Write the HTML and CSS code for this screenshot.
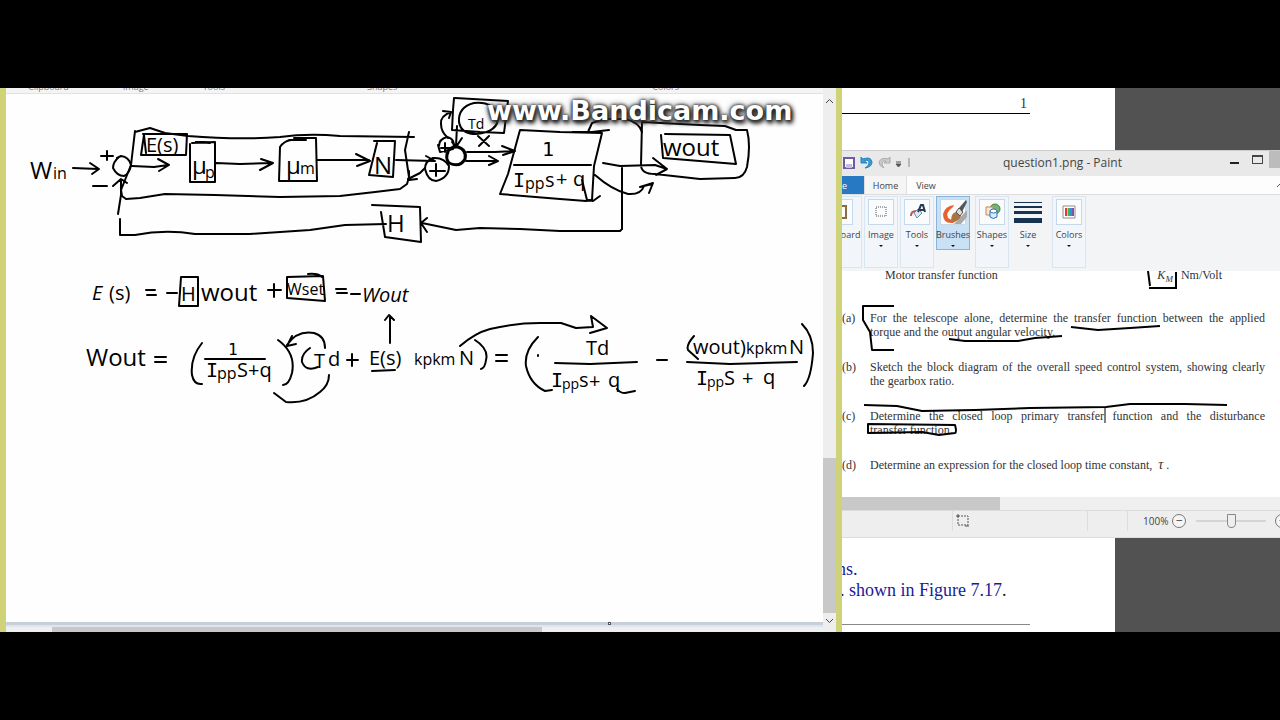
FILE: index.html
```html
<!DOCTYPE html>
<html lang="en">
<head>
<meta charset="utf-8">
<title>question1.png - Paint</title>
<link rel="stylesheet" href="styles.css">
</head>
<body>
<main class="screen">
  <section class="board" aria-label="Paint drawing">
    <div class="board-main">
      <div class="board-groups">
        <span class="g-clip">Clipboard</span><span class="g-image">Image</span><span class="g-tools">Tools</span><span class="g-shapes">Shapes</span><span class="g-colors">Colors</span>
      </div>
      <div class="board-canvas">
        <svg class="ink" viewBox="6 94 817 526" role="img" aria-label="Block diagram and equations">
          <!-- block diagram -->
          <path d="M135 132L150 128L165 133L188 136Q240 140 280 137Q308 133 340 136L414 137M135 131L131 165L121 190L122 196L126 199L140 198L165 194L215 195L280 197L340 196L375 192L400 189L407 184L409 177L405 150L409 132"/>
          <path d="M143 134H187L186 155H141L144 135L146 153M101 156H113M107 151V160M93 186H107M73 168L98 169M90 163L99 169L92 174"/>
          <path d="M119 157Q113 162 113 168Q117 176 124 176Q130 173 131 165Q129 157 121 156L117 158M132 166L154 167L168 165M158 159L169 165L159 171"/>
          <path d="M192 143L215 142L215 182H190V144M196 142L210 143M216 163L240 164L272 163M261 159L273 163L260 170M289 140L306 140M294 138L316 138L317 181H279L280 147Q284 141 291 140M318 160H369M356 154L370 161L357 166"/>
          <path d="M374 141H395L393 177L369 175L377 143M396 160L434 161M426 156L435 161M408 179L420 173L425 168M409 171V180L417 179"/>
          <path d="M113 186L121 179L127 183M121 180V195L118 214M120 219V235L135 235Q165 229 195 234L250 234L310 230L345 225L386 224M372 205L420 207L421 242L385 237L381 212M427 218L421 223L427 232M422 223L456 230L480 228L520 229L560 231L620 231L622 229V168"/>
          <path d="M455 98L508 101L504 133L480 132L452 130L453 110L454 98M459 122Q458 107 474 103Q493 101 498 116Q499 132 476 134Q461 134 459 122M448 138Q441 132 441 124Q440 116 451 112L443 111M451 112L449 118M457 126L456 146M452 142L456 147L462 138"/>
          <path d="M439 146Q439 139 447 137Q456 139 453 149L440 152L438 145M445 143V152M441 148H451M425 169Q425 161 433 158Q444 157 449 166Q449 178 436 181Q428 181 425 169M436 164V176M430 171H445"/>
          <path class="bold" d="M447 154Q449 146 458 147Q467 150 465 159Q460 168 449 163Q445 158 448 152"/>
          <path d="M478 136L489 146M489 136L479 146M467 152H495L515 151M502 146L515 151L503 155M466 161L497 161M489 156L498 161L489 165"/>
          <path d="M520 130L560 132L602 133L594 166L592 200L586 201L560 199L500 194L508 174ZM514 165H591M573 132H592L609 130M588 132L592 123L605 119L625 119Q639 122 642 132M582 180L587 200L593 201L600 196M595 175Q612 190 628 194Q641 195 644 186L652 184M640 187L653 183L649 193"/>
          <path d="M642 122L700 125L725 126L736 130L747 130Q751 145 747 167Q744 178 735 178L700 179L655 174Q641 174 641 165ZM665 134L730 135L736 164L663 158L661 135M603 163L620 166L655 165L667 169L656 175M653 158L667 169"/>
          <text class="t24" x="30" y="179">W</text><text class="t16" x="53" y="179">in</text>
          <text class="t20" x="146" y="152">E(s)</text>
          <text class="t24" x="192" y="174">μ</text><text class="t16" x="205" y="178">p</text>
          <text class="t24" x="286" y="174">μ</text><text class="t16" x="300" y="174">m</text>
          <text class="t24" x="374" y="174">N</text>
          <text class="t24" x="387" y="232">H</text>
          <text class="t14" x="468" y="129">Td</text>
          <text class="t20 slab" x="542" y="156">1</text>
          <text class="t20 slab" x="513" y="187">I</text><text class="t16" x="525" y="189">pp</text><text class="t20" x="545" y="187">s</text><text class="t20" x="556" y="186">+</text><text class="t20" x="573" y="186">q</text>
          <text class="t24" x="663" y="156">wout</text>
          <!-- error equation -->
          <path d="M167 293H177M181 277H198V306H179ZM268 290H281M274 284V297M287 277L323 276L325 301L287 298ZM308 274Q318 273 322 277M351 294H360M336 289H346M337 293H347M390 343V317M385 320L389 315L394 320M146 290H155M147 295H156"/>
          <text class="t20 slant" x="92" y="300">E</text><text class="t20" x="109" y="300">(s)</text>
          <text class="t20" x="181" y="301">H</text><text class="t24" x="201" y="301">wout</text>
          <text class="t16" x="287" y="295">Wset</text><text class="t20 slant" x="362" y="302">Wout</text>
          <!-- output equation -->
          <path d="M202 343Q190 358 192 375Q194 385 202 384M205 359L265 359M278 340Q296 353 292 373Q289 385 283 385M287 345Q297 330 314 333Q325 336 325 348M292 336L287 346L296 344M310 348Q301 354 302 362Q306 372 318 367M274 393L286 402Q306 404 320 392Q329 385 329 375M347 360H358M352 354V366M372 371L395 370M155 357H166M155 362H166"/>
          <path d="M460 346Q475 333 490 329Q515 323 540 323L561 323L576 328L593 327L591 316L607 328L590 333M475 340Q489 349 486 360Q485 368 481 369M496 355H507M496 361H507M538 337Q524 351 526 366Q530 384 545 391L552 390M538 355V356M555 363L590 364L637 362M657 360H667M687 362L730 364L797 362M694 336Q686 345 688 350L698 359M802 324Q813 335 813 353Q811 379 804 386M617 389Q620 393 625 393L635 391"/>
          <text class="t24" x="86" y="366">Wout</text>
          <text class="t16 slab" x="228" y="355">1</text>
          <text class="t20 slab" x="206" y="377">I</text><text class="t16" x="217" y="379">pp</text><text class="t20" x="237" y="377">S+q</text>
          <text class="t20" x="314" y="368">T</text><text class="t20" x="328" y="366">d</text>
          <text class="t20" x="369" y="365">E(s)</text><text class="t16" x="414" y="365">kpkm</text><text class="t20" x="459" y="365">N</text>
          <text class="t20" x="586" y="355">Td</text>
          <text class="t20 slab" x="551" y="387">I</text><text class="t14" x="562" y="389">pp</text><text class="t20" x="579" y="387">s</text><text class="t20" x="589" y="388">+</text><text class="t20" x="608" y="387">q</text>
          <text class="t20" x="693" y="354">wout)</text><text class="t16" x="746" y="354">kpkm</text><text class="t20" x="789" y="354">N</text>
          <text class="t20 slab" x="696" y="385">I</text><text class="t14" x="707" y="387">pp</text><text class="t20" x="724" y="385">S</text><text class="t20" x="742" y="385">+</text><text class="t20" x="763" y="384">q</text>
        </svg>
      </div>
      <div class="canvas-edge"><span class="handle"></span></div>
      <div class="hscroll"><span class="hscroll-thumb"></span></div>
    </div>
    <div class="vscroll">
      <svg class="chev" viewBox="0 0 13 15"><path d="M3 9L6.500 5.500L10 9"/></svg>
      <span class="vscroll-thumb"></span>
      <svg class="chev" viewBox="0 0 13 15"><path d="M3 6L6.500 9.500L10 6"/></svg>
    </div>
  </section>

  <section class="desk">
    <div class="page page-top"><div class="page-head">1</div></div>

    <article class="paint">
      <header class="titlebar">
        <svg class="qat" viewBox="0 0 70 16" aria-hidden="true">
          <path d="M2 3H12V13H2Z" fill="#fff" stroke="#6f5aa5" stroke-width="2"/><path d="M4 9H10V13H4Z" fill="#c5bddc"/>
          <path d="M19 2V8H25L22.500 6Q27 4 27 8Q27 11 23 13Q30 12 30 7Q29 1 21 4Z" fill="#3a9bd5" stroke="#2583bd"/>
          <path d="M48 2V8H42L44 6Q40 5 40 8Q40 11 42 13Q37 11 37 7Q39 2 46 4Z" fill="#ccc" stroke="#aaa"/>
          <path d="M54 7H59M54 9H59L56.500 12Z" stroke="#555" fill="#555"/><path d="M67 3V12" stroke="#888"/>
        </svg>
        <h1>question1.png - Paint</h1>
        <button class="winbtn" aria-label="Minimize"><i class="min"></i></button>
        <button class="winbtn" aria-label="Maximize"><i class="max"></i></button>
        <button class="winbtn close" aria-label="Close"></button>
      </header>
      <nav class="tabs">
        <button class="tab file">File</button><button class="tab on">Home</button><button class="tab">View</button>
        <svg class="collapse" viewBox="0 0 8 8" aria-hidden="true"><path d="M1 6L4 3L7 6"/></svg>
      </nav>
      <div class="ribbon">
        <button class="tool clip"><span class="pic"><svg viewBox="0 0 24 24"><path d="M7 6H18V18H7Z" fill="#fff" stroke="#8b6b3f" stroke-width="2"/></svg></span>Clipboard<i class="drop"></i></button>
        <button class="tool"><span class="pic"><svg viewBox="0 0 24 24"><path d="M7 7H17V16H7Z" fill="none" stroke="#555" stroke-dasharray="1 1"/></svg></span>Image<i class="drop"></i></button>
        <button class="tool"><span class="pic"><svg viewBox="0 0 24 24"><path d="M6 16Q6 11 11 11" fill="none" stroke="#cf5142" stroke-width="2"/><path d="M9 13L13 9L17 13L12 18Z" fill="#dde9f2" stroke="#6e8ba5"/><path d="M13 12L16 5H18L20 12M15 10H19" fill="none" stroke="#263a50" stroke-width="2"/></svg></span>Tools<i class="drop"></i></button>
        <button class="tool brush"><span class="pic"><svg viewBox="0 0 26 26"><path d="M13 5Q4 6 2 14Q2 24 12 23L20 18Q12 22 7 18Q4 13 12 7Z" fill="#e66231"/><path d="M26 0V17L20 24H13L26 10Z" fill="#aaa"/><path d="M10 21Q10 13 15 12L20 16Q18 22 10 21Z" fill="#a97542"/><path d="M15 12L18 8L22 12L19 16Z" fill="#ddd" stroke="#555"/><path d="M18 8L25 0L26 2L21 12Z" fill="#555"/></svg></span>Brushes<i class="drop"></i></button>
        <button class="tool shapes"><span class="pic"><svg viewBox="0 0 24 24"><circle cx="15" cy="9" r="5" fill="#78b46c" stroke="#3c8843"/><path d="M6 7H13V15H6Z" fill="#fbe9dc" stroke="#c98358"/><path d="M10 11V17Q13 20 17 17V11Z" fill="#dcecff" stroke="#2472bd"/><ellipse cx="13.500" cy="11" rx="3.500" ry="2" fill="#fff" stroke="#2472bd"/></svg></span>Shapes<i class="drop"></i></button>
        <button class="tool size"><span class="pic"><svg viewBox="0 0 28 26"><path d="M0 3H28V4H0ZM0 7H28V9H0ZM0 12H28V15H0ZM0 19H28V24H0Z" fill="#18334f"/></svg></span>Size<i class="drop"></i></button>
        <button class="tool colors"><span class="pic"><svg viewBox="0 0 24 24"><path d="M6 6H18V18H6Z" fill="#fff" stroke="#998d84"/><path d="M8 8H10V16H8Z" fill="#e4373e"/><path d="M10 8H11V16H10Z" fill="#f4c82e"/><path d="M11 8H13V16H11Z" fill="#45b449"/><path d="M13 8H15V16H13Z" fill="#2b94d8"/><path d="M15 8H17V16H15Z" fill="#7954b5"/></svg></span>Colors<i class="drop"></i></button>
      </div>
      <div class="sheet">
        <div class="motor"><span>Motor transfer function</span><span><i>K<sub>M</sub></i><span class="unit">Nm/Volt</span></span></div>
        <div class="q"><span>(a)</span><p><span class="full">For the telescope alone, determine the transfer function between the applied</span> torque and the output angular velocity.</p></div>
        <div class="q"><span>(b)</span><p><span class="full">Sketch the block diagram of the overall speed control system, showing clearly</span> the gearbox ratio.</p></div>
        <div class="q"><span>(c)</span><p><span class="full">Determine the closed loop primary transfer function and the disturbance</span> transfer function.</p></div>
        <div class="q"><span>(d)</span><p>Determine an expression for the closed loop time constant, &nbsp;<i class="tau">τ</i> .</p></div>
        <svg class="marks" viewBox="842 271 438 226" aria-hidden="true">
          <path d="M1148 271L1150 286M1149 288H1177M1176 272V288M894 306H863L863 320L870 332L872 350H894M1071 327L1098 330L1130 328L1160 326M949 339L965 341H1018L1035 338L1062 336M864 405L897 406L922 411L975 410L1030 408L1106 407L1130 404H1185L1227 405M868 424L955 425Q957 432 955 433L939 435L922 432L868 433Z"/><path class="thin" d="M1105 408V423"/>
        </svg>
      </div>
      <div class="paint-scroll"><span></span></div>
      <footer class="status">
        <span class="cell first"></span>
        <span class="cell dims"><svg viewBox="0 0 16 14" aria-hidden="true"><path d="M3 2H13V11H3Z" stroke-dasharray="2 1"/><path d="M1 2H4M3 0V3M10 12H14"/></svg></span>
        <span class="cell gap"></span>
        <label for="zoom">100%</label>
        <button class="round" aria-label="Zoom out">−</button>
        <input id="zoom" type="range" min="0" max="100" value="50">
        <button class="round" aria-label="Zoom in">+</button>
      </footer>
    </article>

    <div class="page page-bottom"><p class="ns">ns.</p><p><span>.</span> shown in Figure 7.17<b>.</b></p><hr></div>
  </section>
  <div class="watermark">www.Bandicam.com</div>
</main>
</body>
</html>
```
FILE: styles.css
```css
* { box-sizing: border-box; }
body { margin: 0; background: #000; font-family: "Open Sans", "Noto Sans", sans-serif; }
button { font: inherit; color: inherit; border: 0; padding: 0; margin: 0; background: none; }
p, h1 { margin: 0; font-weight: 400; }
.screen { position: relative; display: flex; min-height: 544px; height: calc(100vh - 176px); margin: 88px 0; overflow: hidden; }

/* drawing window */
.board { display: flex; flex: 0 0 auto; width: 842px; max-width: 66%; border: solid #cfd276; border-width: 0 6px; box-shadow: inset 1px 0 #b7b567; background: #fff; }
.board-main { flex: 1; min-width: 0; display: flex; flex-direction: column; }
.board-groups { display: flex; align-items: flex-end; height: 6px; overflow: hidden; background: #f4f4f4; border-bottom: 1px solid #e2e2e2; font-size: 9px; line-height: 10px; color: #777; padding: 0 0 1px 22px; }
.g-image { margin-left: 54px; }
.g-tools { margin-left: 54px; }
.g-shapes { margin-left: 142px; }
.g-colors { margin-left: 255px; }
.board-canvas { flex: 1; min-height: 0; background: #fefefe; }
.ink { display: block; width: 100%; fill: none; stroke: #000; stroke-width: 2; stroke-linecap: round; stroke-linejoin: round; }
.ink .bold { stroke-width: 3; }
.ink text { fill: #000; stroke: none; font-family: "Open Sans", sans-serif; }
.ink .slab { font-family: "DejaVu Sans Mono", monospace; }
.ink .slant { font-style: italic; }
.t14 { font-size: 14px; }
.t16 { font-size: 16px; }
.t20 { font-size: 20px; }
.t24 { font-size: 24px; }
.canvas-edge { flex: none; height: 5px; background: #c9cfd9; border-bottom: 2px solid #dfe5ee; padding-left: 602px; }
.handle { display: block; width: 3px; height: 3px; border: 1px solid #555; background: #fff; }
.hscroll { flex: none; height: 5px; background: #efefef; padding-left: 46px; }
.hscroll-thumb { display: block; width: 490px; height: 5px; background: #c8c8c8; }
.vscroll { flex: 0 0 13px; display: flex; flex-direction: column; background: #eee; padding-top: 6px; }
.vscroll-thumb { display: block; flex: 0 0 155px; margin-top: auto; background: #c8c8c8; }
.chev { flex: none; width: 13px; height: 15px; fill: none; stroke: #444; stroke-width: 1; }
.chev:last-child { margin-bottom: 4px; }

/* right side */
.desk { flex: 1; min-width: 0; display: flex; flex-direction: column; background: #525252; font-family: "Liberation Serif", serif; }
.page { flex: none; width: 273px; background: #fff; }
.page-top { height: 62px; }
.page-head { width: 188px; height: 26px; padding: 7px 3px 0 0; border-bottom: 1px solid #000; text-align: right; font-size: 14px; line-height: 17px; color: #333; }
.page-bottom { height: 94px; padding-top: 21px; color: #1a1a9a; font-size: 18px; line-height: 21px; white-space: pre; overflow: hidden; }
.page-bottom .ns { margin-left: -5px; }
.page-bottom span { margin-left: -2px; }
.page-bottom b { font-weight: 400; color: #222; }
.page-bottom hr { width: 188px; margin: 23px 0 0; border: 0; border-top: 1px solid #888; }

.paint { flex: 1; min-height: 0; display: flex; flex-direction: column; overflow: hidden; background: #fff; font-family: "Open Sans", sans-serif; }
.titlebar { flex: none; display: flex; align-items: flex-start; height: 26px; background: #e9e9e9; border-top: 1px solid #ccc; color: #444; }
.qat { width: 70px; height: 16px; margin-top: 4px; fill: none; }
.titlebar h1 { flex: 1; padding-left: 91px; font-size: 12px; line-height: 24px; white-space: nowrap; }
.winbtn { flex: none; width: 23px; height: 17px; display: flex; justify-content: center; align-items: center; }
.winbtn.close { width: 11px; background: #bcbcbc; }
.min { width: 9px; height: 2px; background: #222; margin-top: 6px; }
.max { width: 11px; height: 9px; border: 1px solid #444; border-top-width: 2px; }
.tabs { flex: none; display: flex; height: 19px; background: #fdfdfd; border-bottom: 1px solid #ddd; font-size: 9px; color: #444; }
.tab { width: 38px; line-height: 20px; }
.tab.on { background: #f5f5f5; border: solid #ddd; border-width: 0 1px; width: 43px; }
.tab.file { width: 50px; margin-left: -28px; background: #2679c2; color: #fff; text-align: right; padding-right: 17px; }
.collapse { width: 8px; height: 8px; margin: 5px -4px 0 auto; fill: none; stroke: #555; }
.ribbon { flex: none; display: flex; gap: 2px; height: 76px; padding-top: 1px; background: #f3f4f5; color: #444; font-size: 9px; }
.tool { flex: none; width: 34px; height: 72px; display: flex; flex-direction: column; align-items: center; border: 1px solid #d8e6f2; background: #f2f6fa; line-height: 20px; padding-top: 2px; }
.pic { width: 26px; height: 26px; display: grid; place-items: center; border: 1px solid #c5d9e9; background: #f9fbfd; }
.pic svg { width: 24px; height: 24px; }
.drop { border: solid transparent; border-width: 2px 2px 0; border-top-color: #111; }
.tool.clip { width: 44px; margin-left: -24px; }
.tool.brush { height: 54px; background: #c9e0f5; border-color: #88b5db; }
.brush svg { width: 26px; height: 26px; }
.tool.shapes { margin-left: 3px; }
.tool.size { border-color: transparent; background: none; }
.size .pic { border: 0; background: none; width: 28px; }
.size svg { width: 28px; height: 26px; }
.tool.colors { margin-left: 5px; }

.sheet { position: relative; flex: 1; min-height: 0; background: #fff; font-family: "Liberation Serif", serif; font-size: 12px; line-height: 14px; color: #333; padding-right: 15px; }
.motor { display: flex; justify-content: space-between; height: 40px; padding: 0 43px; line-height: 8px; }
.motor sub { font-size: 9px; line-height: 0; }
.unit { margin-left: 8px; }
.q { display: flex; height: 49px; }
.q > span { flex: 0 0 28px; }
.q p { flex: 1; }
.full { display: block; text-align-last: justify; }
.tau { font-size: 14px; line-height: 1; }
.marks { position: absolute; left: 0; top: 0; width: 438px; height: 226px; fill: none; stroke: #000; stroke-width: 2; stroke-linejoin: round; }
.marks .thin { stroke-width: 1; }
.paint-scroll { flex: none; height: 13px; background: #efefef; }
.paint-scroll span { display: block; width: 158px; height: 13px; background: #c8c8c8; }
.status { flex: none; display: flex; align-items: center; height: 28px; padding-bottom: 6px; background: #eee; border-top: 1px solid #dcdcdc; border-bottom: 1px solid #ddd; font-size: 10px; color: #444; overflow: hidden; }
.cell { flex: none; align-self: stretch; border-right: 1px solid #ddd; }
.first { width: 111px; }
.dims { width: 135px; padding: 3px 2px; }
.dims svg { width: 16px; height: 14px; fill: none; stroke: #555; }
.gap { width: 40px; margin-right: 15px; }
.round { flex: none; width: 14px; height: 14px; border: 1px solid #777; border-radius: 50%; line-height: 10px; font-size: 12px; background: #f5f5f5; margin-left: 4px; }
#zoom { appearance: none; flex: none; width: 70px; height: 16px; margin: 0 5px 0 10px; background: linear-gradient(#d5d5d5, #d5d5d5) center / 100% 2px no-repeat; }
#zoom::-webkit-slider-thumb { appearance: none; width: 9px; height: 14px; background: #eee; border: 1px solid #888; border-radius: 1px 1px 5px 5px; }

.watermark { position: absolute; left: 487px; top: 7px; font: 700 27px/31px "DejaVu Sans", sans-serif; color: #fff; text-shadow: 0 0 3px #222, 1px 2px 4px #222, 2px 3px 5px #333, 0 0 6px #444; }
```
